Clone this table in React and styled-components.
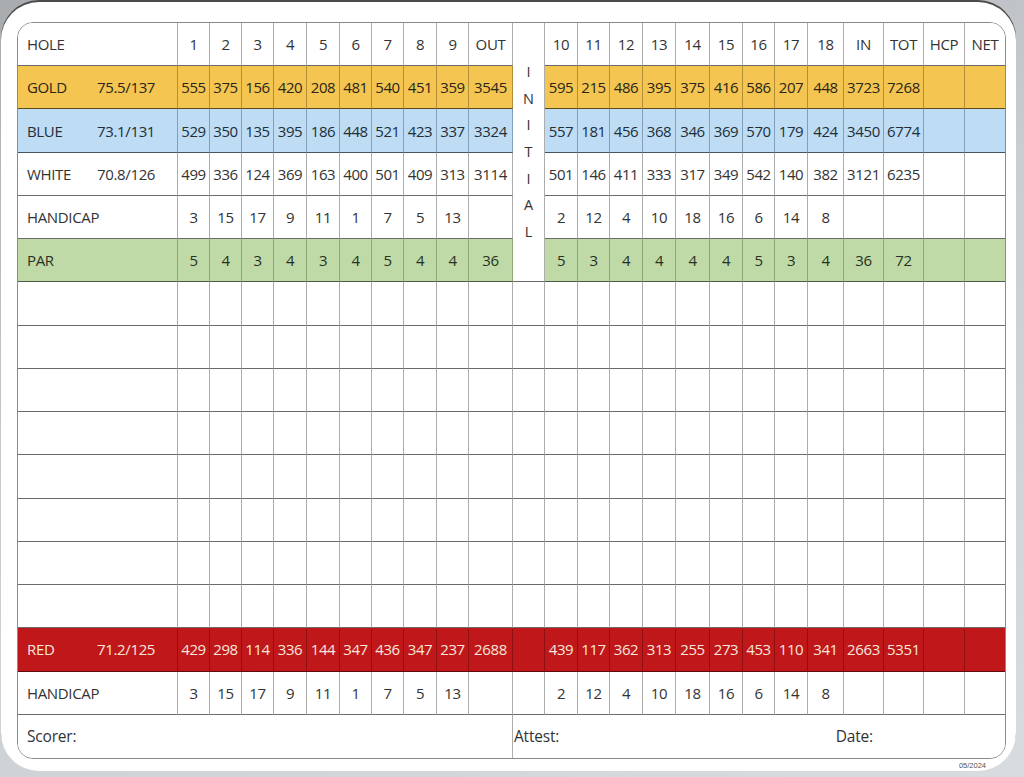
import React from "react";
import styled, { createGlobalStyle } from "styled-components";

const Global = createGlobalStyle`
  html, body { margin: 0; padding: 0; }
  body {
    width: 1024px;
    height: 777px;
    overflow: hidden;
    font-family: "Open Sans", "Noto Sans", sans-serif;
  }
`;

const COLS = "160px 32px 32px 32px 33px 33px 32px 32px 33px 32px 44px 32px 33px 32px 33px 33px 34px 33px 32px 33px 36px 40px 40px 41px 40px";

const TONES = {
  plain: { bg: "#ffffff", fg: "#333333", v: "rgba(0,0,0,0.32)", h: "rgba(0,0,0,0.58)" },
  gold: { bg: "#f4c550", fg: "#2b261a", v: "rgba(60,40,0,0.35)", h: "rgba(0,0,0,0.62)" },
  blue: { bg: "#bedcf3", fg: "#222e38", v: "rgba(0,30,60,0.32)", h: "rgba(0,0,0,0.62)" },
  green: { bg: "#bfdaa7", fg: "#283122", v: "rgba(20,50,0,0.3)", h: "rgba(0,0,0,0.58)" },
  red: { bg: "#c0171b", fg: "#f7e7da", v: "rgba(60,0,0,0.35)", h: "rgba(0,0,0,0.5)" },
};

const Page = styled.div`
  width: 1024px;
  height: 777px;
  background: linear-gradient(160deg, #a9acaf 0%, #c9ccd0 45%, #d9dcdf 100%);
  padding: 2px 0 0 1px;
  box-sizing: border-box;
`;

const Card = styled.div`
  width: 1015px;
  height: 769px;
  background: #ffffff;
  border-radius: 38px;
  box-shadow: 0 -2px 0 #4b4b4b;
  box-sizing: border-box;
  padding: 20px 0 0 16px;
  display: flex;
  flex-direction: column;
`;

const Table = styled.div`
  display: grid;
  grid-template-columns: ${COLS};
  grid-template-rows: repeat(17, 1fr);
  width: 989px;
  height: 737px;
  box-sizing: border-box;
  border: 1px solid #8a8a8a;
  border-radius: 16px;
  overflow: hidden;
  background: #fff;
`;

const Cell = styled.div`
  box-sizing: border-box;
  display: flex;
  align-items: center;
  justify-content: ${(p) => (p.$left ? "flex-start" : "center")};
  padding: ${(p) => (p.$left ? "0 0 0 9px" : "0")};
  background: ${(p) => TONES[p.$tone].bg};
  color: ${(p) => TONES[p.$tone].fg};
  border-right: ${(p) => (p.$last ? "none" : `1px solid ${TONES[p.$tone].v}`)};
  border-bottom: ${(p) => (p.$bottom ? "none" : `1px solid ${TONES[p.$tone].h}`)};
  font-size: 15px;
  letter-spacing: -0.35px;
  white-space: nowrap;
  grid-column: ${(p) => (p.$span ? `span ${p.$span}` : "auto")};
`;

const LabelName = styled.span`
  display: inline-block;
  width: 70px;
`;

const Rating = styled.span`
  display: inline-block;
`;

const Initial = styled.div`
  grid-column: 12;
  grid-row: 1 / span 6;
  box-sizing: border-box;
  border-right: 1px solid rgba(0, 0, 0, 0.32);
  border-bottom: 1px solid rgba(0, 0, 0, 0.58);
  background: #fff;
  display: flex;
  flex-direction: column;
  align-items: center;
  justify-content: center;
  color: #333;
  font-size: 14.5px;
`;

const Letter = styled.span`
  line-height: 26.6px;
`;

const FooterCell = styled(Cell)`
  justify-content: flex-start;
  font-size: 15.5px;
  letter-spacing: -0.2px;
  padding-left: ${(p) => p.$pad}px;
`;

const DateLabel = styled.span`
  margin-left: auto;
  margin-right: 132px;
`;

const Note = styled.div`
  width: 989px;
  box-sizing: border-box;
  padding-right: 20px;
  text-align: right;
  font-family: "Liberation Sans", sans-serif;
  font-size: 7.5px;
  color: #555;
  margin-top: 2px;
`;

const FRONT = ["1", "2", "3", "4", "5", "6", "7", "8", "9", "OUT"];
const BACK = ["10", "11", "12", "13", "14", "15", "16", "17", "18", "IN", "TOT", "HCP", "NET"];
const HCP = ["3", "15", "17", "9", "11", "1", "7", "5", "13", ""];
const HCP_B = ["2", "12", "4", "10", "18", "16", "6", "14", "8", "", "", "", ""];

const rows = [
  { tone: "plain", name: "HOLE", front: FRONT, back: BACK, merged: true },
  {
    tone: "gold", name: "GOLD", rating: "75.5/137", merged: true,
    front: ["555", "375", "156", "420", "208", "481", "540", "451", "359", "3545"],
    back: ["595", "215", "486", "395", "375", "416", "586", "207", "448", "3723", "7268", "", ""],
  },
  {
    tone: "blue", name: "BLUE", rating: "73.1/131", merged: true,
    front: ["529", "350", "135", "395", "186", "448", "521", "423", "337", "3324"],
    back: ["557", "181", "456", "368", "346", "369", "570", "179", "424", "3450", "6774", "", ""],
  },
  {
    tone: "plain", name: "WHITE", rating: "70.8/126", merged: true,
    front: ["499", "336", "124", "369", "163", "400", "501", "409", "313", "3114"],
    back: ["501", "146", "411", "333", "317", "349", "542", "140", "382", "3121", "6235", "", ""],
  },
  { tone: "plain", name: "HANDICAP", merged: true, front: HCP, back: HCP_B },
  {
    tone: "green", name: "PAR", merged: true,
    front: ["5", "4", "3", "4", "3", "4", "5", "4", "4", "36"],
    back: ["5", "3", "4", "4", "4", "4", "5", "3", "4", "36", "72", "", ""],
  },
  ...Array.from({ length: 8 }, () => ({
    tone: "plain", name: "", front: Array(10).fill(""), back: Array(13).fill(""),
  })),
  {
    tone: "red", name: "RED", rating: "71.2/125",
    front: ["429", "298", "114", "336", "144", "347", "436", "347", "237", "2688"],
    back: ["439", "117", "362", "313", "255", "273", "453", "110", "341", "2663", "5351", "", ""],
  },
  { tone: "plain", name: "HANDICAP", front: HCP, back: HCP_B },
];

function Row({ row }) {
  const { tone } = row;
  return (
    <>
      <Cell $tone={tone} $left>
        <LabelName>{row.name}</LabelName>
        {row.rating && <Rating>{row.rating}</Rating>}
      </Cell>
      {row.front.map((v, i) => (
        <Cell key={"f" + i} $tone={tone}>{v}</Cell>
      ))}
      {!row.merged && <Cell $tone={tone} />}
      {row.back.map((v, i) => (
        <Cell key={"b" + i} $tone={tone} $last={i === row.back.length - 1}>{v}</Cell>
      ))}
    </>
  );
}

export default function App() {
  return (
    <>
      <Global />
      <Page>
        <Card>
          <Table>
            <Initial>
              {"INITIAL".split("").map((c, i) => (
                <Letter key={i}>{c}</Letter>
              ))}
            </Initial>
            {rows.map((r, i) => (
              <Row key={i} row={r} />
            ))}
            <FooterCell $tone="plain" $span={11} $bottom $pad={9}>Scorer:</FooterCell>
            <FooterCell $tone="plain" $span={14} $bottom $last $pad={1}>
              Attest:
              <DateLabel>Date:</DateLabel>
            </FooterCell>
          </Table>
          <Note>05/2024</Note>
        </Card>
      </Page>
    </>
  );
}
